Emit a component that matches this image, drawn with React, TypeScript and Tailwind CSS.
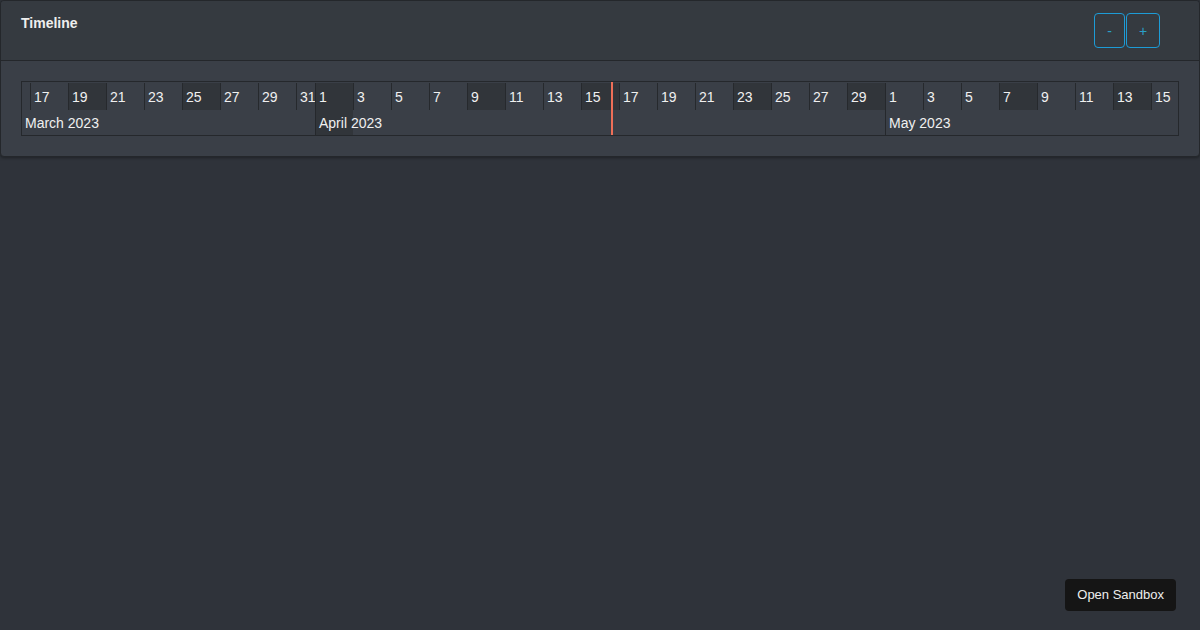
import React from 'react';

type Cell = { label?: string; w?: number; dark?: boolean };
type Month = { name: string; cells: Cell[]; firstDark?: boolean; first?: boolean };

const months: Month[] = [
  {
    name: 'March 2023',
    first: true,
    cells: [
      { w: 8 },
      { label: '17' },
      { label: '19', dark: true },
      { label: '21' },
      { label: '23' },
      { label: '25', dark: true },
      { label: '27' },
      { label: '29' },
      { label: '31', w: 19 },
    ],
  },
  {
    name: 'April 2023',
    firstDark: true,
    cells: [
      { label: '1', dark: true },
      { label: '3' },
      { label: '5' },
      { label: '7' },
      { label: '9', dark: true },
      { label: '11' },
      { label: '13' },
      { label: '15', dark: true },
      { label: '17' },
      { label: '19' },
      { label: '21' },
      { label: '23', dark: true },
      { label: '25' },
      { label: '27' },
      { label: '29', dark: true },
    ],
  },
  {
    name: 'May 2023',
    cells: [
      { label: '1' },
      { label: '3' },
      { label: '5' },
      { label: '7', dark: true },
      { label: '9' },
      { label: '11' },
      { label: '13', dark: true },
      { label: '15', w: 27 },
    ],
  },
];

const MonthBlock: React.FC<{ month: Month }> = ({ month }) => (
  <div
    className={
      'flex flex-col shrink-0 ' + (month.first ? '' : 'border-l border-[#25282c]')
    }
  >
    <div className="flex h-[27px]">
      {month.cells.map((c, i) => {
        const w = c.w ?? (i === 0 && !month.first ? 37 : 38);
        const hasBorder = c.label && !(i === 0 && !month.first);
        return (
          <div
            key={i}
            className={
              'flex items-center shrink-0 ' +
              (hasBorder ? 'border-l border-[#26292d] pl-[3px] ' : 'pl-[3px] ') +
              (c.dark ? 'bg-[#31353a]' : '')
            }
            style={{ width: w }}
          >
            {c.label}
          </div>
        );
      })}
    </div>
    <div
      className={
        'h-[25px] flex items-center pl-[3px] whitespace-nowrap ' +
        (month.firstDark
          ? 'bg-[linear-gradient(to_right,#31353a_37px,transparent_37px)]'
          : '')
      }
    >
      {month.name}
    </div>
  </div>
);

export default function App() {
  return (
    <div
      className="min-h-screen w-full bg-[#2f333a] text-[#f0f0f0] text-sm"
      style={{ fontFamily: '"Liberation Sans", Arial, sans-serif' }}
    >
      <div className="border border-[#24272b] rounded-[4px] bg-[#3a3f47] shadow-[0_1px_3px_rgba(0,0,0,0.35)]">
        <div className="h-[60px] bg-[#353a40] border-b border-[#24272b] rounded-t-[4px] flex justify-between items-start pt-3 pl-5 pr-[39px]">
          <h3 className="font-bold text-sm leading-5 text-[#eeeeee]">Timeline</h3>
          <div className="flex gap-px">
            <button className="h-[35px] w-[31px] flex items-center justify-center border border-[#1d9bd6] rounded-[4px] text-[#2aa0c8] text-sm leading-5">
              -
            </button>
            <button className="h-[35px] w-[34px] flex items-center justify-center border border-[#1d9bd6] rounded-[4px] text-[#2aa0c8] text-sm leading-5">
              +
            </button>
          </div>
        </div>
        <div className="px-5 pt-5 pb-5">
          <div className="relative border border-[#25282c] pt-px overflow-hidden">
            <div className="flex">
              {months.map(m => (
                <MonthBlock key={m.name} month={m} />
              ))}
            </div>
            <div className="absolute top-0 bottom-0 left-[589px] w-[2px] bg-[#ee6f58]" />
          </div>
        </div>
      </div>
      <button className="fixed right-[24px] bottom-[19px] h-[32px] px-3 bg-[#151515] rounded-[4px] text-[13px] text-[#eeeeee]">
        Open Sandbox
      </button>
    </div>
  );
}
